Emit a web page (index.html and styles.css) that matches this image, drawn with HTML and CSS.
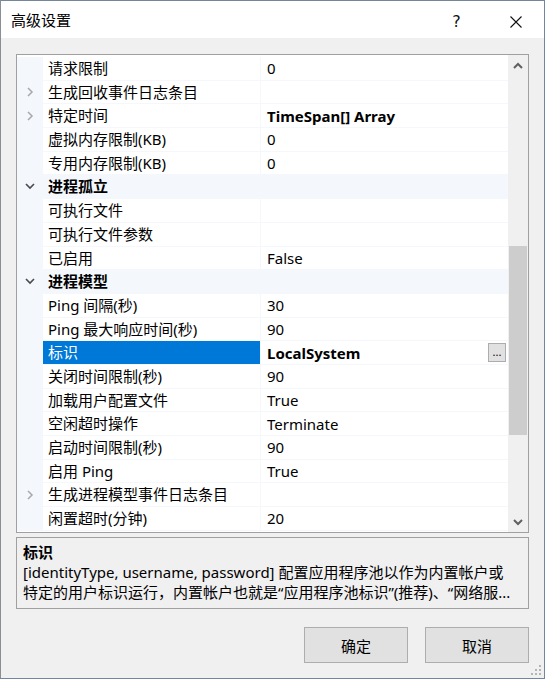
FILE: index.html
```html
<!DOCTYPE html>
<html lang="zh-CN">
<head>
<meta charset="utf-8">
<title>高级设置</title>
<link rel="stylesheet" href="styles.css">
</head>
<body>
<div class="window">
  <div class="titlebar">
    <div class="title">高级设置</div>
    <div class="caption-btn help">?</div>
    <div class="caption-btn close">
      <svg width="12" height="12" viewBox="0 0 12 12"><path d="M0.5 0.5 L11.5 11.5 M11.5 0.5 L0.5 11.5" stroke="#111" stroke-width="1.1" fill="none"/></svg>
    </div>
  </div>
  <div class="body">
    <div class="grid">
      <div class="rows">
        <div class="row"><div class="gutter"></div><div class="name">请求限制</div><div class="value">0</div></div>
        <div class="row"><div class="gutter"><svg class="expand" width="8" height="10" viewBox="0 0 8 10"><polyline points="2,1 6,5 2,9"/></svg></div><div class="name">生成回收事件日志条目</div><div class="value"></div></div>
        <div class="row"><div class="gutter"><svg class="expand" width="8" height="10" viewBox="0 0 8 10"><polyline points="2,1 6,5 2,9"/></svg></div><div class="name">特定时间</div><div class="value bold">TimeSpan[] Array</div></div>
        <div class="row"><div class="gutter"></div><div class="name">虚拟内存限制(KB)</div><div class="value">0</div></div>
        <div class="row"><div class="gutter"></div><div class="name">专用内存限制(KB)</div><div class="value">0</div></div>
        <div class="row category"><div class="gutter"><svg class="collapse" width="10" height="7" viewBox="0 0 10 7"><polyline points="1,1 5,5 9,1"/></svg></div><div class="name">进程孤立</div></div>
        <div class="row"><div class="gutter"></div><div class="name">可执行文件</div><div class="value"></div></div>
        <div class="row"><div class="gutter"></div><div class="name">可执行文件参数</div><div class="value"></div></div>
        <div class="row"><div class="gutter"></div><div class="name">已启用</div><div class="value">False</div></div>
        <div class="row category"><div class="gutter"><svg class="collapse" width="10" height="7" viewBox="0 0 10 7"><polyline points="1,1 5,5 9,1"/></svg></div><div class="name">进程模型</div></div>
        <div class="row"><div class="gutter"></div><div class="name">Ping 间隔(秒)</div><div class="value">30</div></div>
        <div class="row"><div class="gutter"></div><div class="name">Ping 最大响应时间(秒)</div><div class="value">90</div></div>
        <div class="row selected"><div class="gutter"></div><div class="name">标识</div><div class="value bold">LocalSystem<span class="ellipsis-btn">...</span></div></div>
        <div class="row"><div class="gutter"></div><div class="name">关闭时间限制(秒)</div><div class="value">90</div></div>
        <div class="row"><div class="gutter"></div><div class="name">加载用户配置文件</div><div class="value">True</div></div>
        <div class="row"><div class="gutter"></div><div class="name">空闲超时操作</div><div class="value">Terminate</div></div>
        <div class="row"><div class="gutter"></div><div class="name">启动时间限制(秒)</div><div class="value">90</div></div>
        <div class="row"><div class="gutter"></div><div class="name">启用 Ping</div><div class="value">True</div></div>
        <div class="row"><div class="gutter"><svg class="expand" width="8" height="10" viewBox="0 0 8 10"><polyline points="2,1 6,5 2,9"/></svg></div><div class="name">生成进程模型事件日志条目</div><div class="value"></div></div>
        <div class="row"><div class="gutter"></div><div class="name">闲置超时(分钟)</div><div class="value">20</div></div>
      </div>
      <div class="scrollbar">
        <div class="arrow"><svg width="10" height="7" viewBox="0 0 10 7"><polyline points="1,6 5,2 9,6"/></svg></div>
        <div class="track"><div class="thumb"></div></div>
        <div class="arrow"><svg width="10" height="7" viewBox="0 0 10 7"><polyline points="1,1 5,5 9,1"/></svg></div>
      </div>
    </div>
    <div class="desc">
      <div class="desc-title">标识</div>
      <div class="desc-line">[identityType, username, password] 配置应用程序池以作为内置帐户或</div>
      <div class="desc-line">特定的用户标识运行，内置帐户也就是“应用程序池标识”(推荐)、“网络服...</div>
    </div>
    <div class="buttons">
      <div class="btn">确定</div>
      <div class="btn">取消</div>
    </div>
  </div>
  <svg class="grip" width="11" height="11" viewBox="0 0 11 11">
    <rect x="8" y="0" width="2" height="2"/>
    <rect x="4" y="4" width="2" height="2"/><rect x="8" y="4" width="2" height="2"/>
    <rect x="0" y="8" width="2" height="2"/><rect x="4" y="8" width="2" height="2"/><rect x="8" y="8" width="2" height="2"/>
  </svg>
</div>
</body>
</html>
```

FILE: styles.css
```css
html, body {
  margin: 0;
  padding: 0;
}
body {
  font-family: "Noto Sans", "Noto Sans CJK SC", sans-serif;
  font-size: 15px;
  color: #000;
  background: #f0f0f0;
}
.window {
  position: relative;
  width: 545px;
  height: 679px;
  box-sizing: border-box;
  border: 1px solid #73869b;
  border-left-color: #8a8f96;
  background: #f0f0f0;
  display: flex;
  flex-direction: column;
}
.titlebar {
  height: 37px;
  background: #fff;
  display: flex;
  align-items: center;
  flex-shrink: 0;
}
.title {
  padding-left: 10px;
  font-size: 15px;
  flex: 1;
  color: #000;
}
.caption-btn {
  width: 57px;
  height: 37px;
  display: flex;
  align-items: center;
  justify-content: center;
  padding-top: 4px;
  box-sizing: border-box;
}
.help {
  font-family: "DejaVu Sans", sans-serif;
  font-size: 16px;
  color: #111;
  padding-right: 4px;
  padding-top: 3px;
}
.body {
  flex: 1;
  padding: 16px 15px 15px 15px;
  display: flex;
  flex-direction: column;
}
.grid {
  height: 479px;
  box-sizing: border-box;
  border: 1px solid #a0a0a0;
  background: #fff;
  display: flex;
  overflow: hidden;
  flex-shrink: 0;
}
.rows {
  flex: 1;
  padding-top: 2px;
  background: #fff;
}
.row {
  height: 23.7px;
  box-sizing: border-box;
  display: flex;
  border-bottom: 1px solid #f4f7fc;
  line-height: 22px;
  white-space: nowrap;
}
.gutter {
  width: 26px;
  flex-shrink: 0;
  background: #f4f7fc;
  display: flex;
  align-items: center;
  justify-content: center;
}
.name {
  width: 218px;
  flex-shrink: 0;
  box-sizing: border-box;
  padding-left: 5px;
  border-right: 1px solid #f4f7fc;
  overflow: hidden;
}
.value {
  flex: 1;
  padding-left: 6px;
  display: flex;
  align-items: center;
}
.bold {
  font-weight: bold;
}
.category {
  background: #f4f7fc;
}
.category .name {
  font-weight: bold;
  border-right: none;
}
.selected .name {
  background: #0078d7;
  color: #fff;
}
.expand polyline {
  fill: none;
  stroke: #a8a8a8;
  stroke-width: 1.5;
}
.collapse polyline {
  fill: none;
  stroke: #4a4a4a;
  stroke-width: 1.6;
}
.ellipsis-btn {
  margin-left: auto;
  margin-right: 2px;
  width: 18px;
  height: 19px;
  box-sizing: border-box;
  background: #e1e1e1;
  border: 1px solid #adadad;
  font-size: 11px;
  font-weight: normal;
  line-height: 18px;
  text-align: center;
  display: flex;
  align-items: flex-end;
  justify-content: center;
}
.scrollbar {
  width: 20px;
  flex-shrink: 0;
  background: #f0f0f0;
  display: flex;
  flex-direction: column;
}
.arrow {
  height: 20px;
  display: flex;
  align-items: center;
  justify-content: center;
}
.arrow polyline {
  fill: none;
  stroke: #606060;
  stroke-width: 2;
}
.track {
  flex: 1;
}
.thumb {
  margin: 171px 1px 0 1px;
  height: 189px;
  background: #cdcdcd;
}
.desc {
  margin-top: 4px;
  height: 72px;
  box-sizing: border-box;
  border: 1px solid #a0a0a0;
  padding: 4px 6px 0 6px;
  line-height: 20px;
  overflow: hidden;
  flex-shrink: 0;
}
.desc-title {
  font-weight: bold;
}
.desc-line {
  white-space: nowrap;
  overflow: hidden;
}
.buttons {
  margin-top: 18px;
  display: flex;
  justify-content: flex-end;
  gap: 17px;
}
.btn {
  width: 104px;
  height: 36px;
  box-sizing: border-box;
  background: #e1e1e1;
  border: 1px solid #adadad;
  display: flex;
  align-items: center;
  justify-content: center;
  font-size: 15px;
}
.grip {
  position: absolute;
  right: 2px;
  bottom: 2px;
  fill: #b4b4b4;
}
```
